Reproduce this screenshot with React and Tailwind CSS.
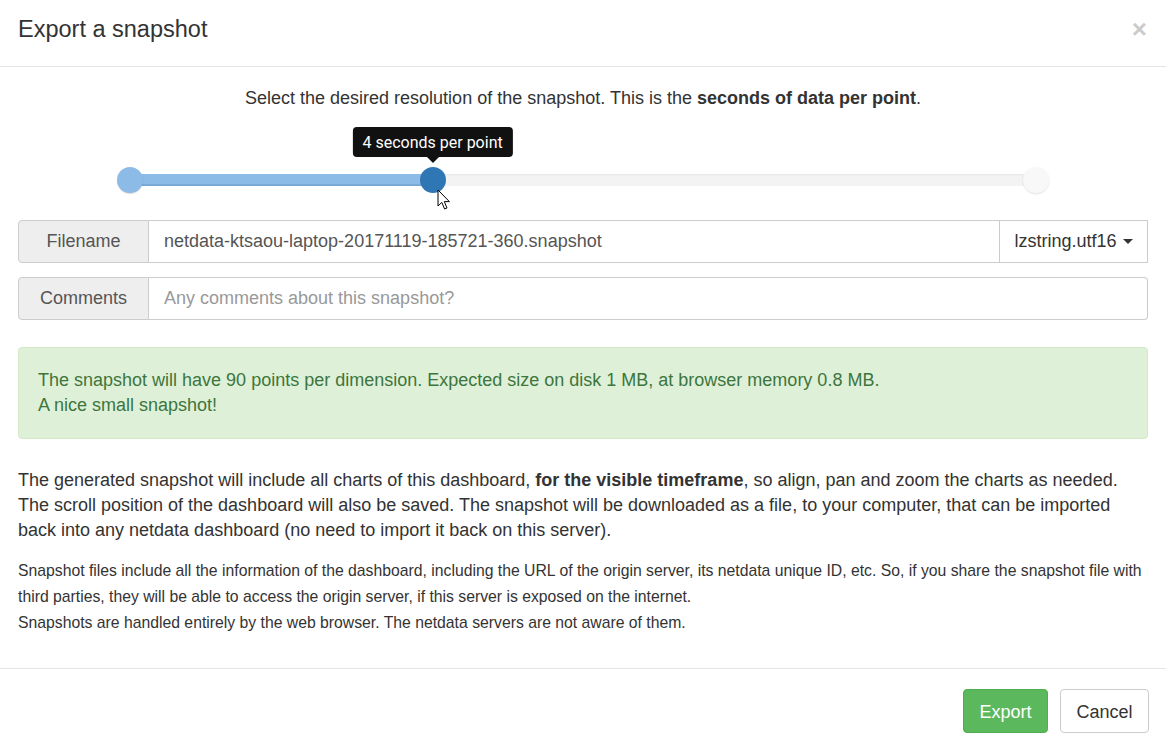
import React, { useState } from "react";

const SnapshotSlider = ({ value }) => {
  // track runs from handle centre 129 to 1036 in the reference
  const pct = value;
  return (
    <div className="px-[99px] mt-[56px]">
      <div className="relative h-[26px]">
        <div className="absolute left-[13px] right-[13px] top-[7px] h-[12px] rounded-full bg-[#f3f3f3] shadow-[inset_0_1px_2px_rgba(0,0,0,0.06)]" />
        <div
          className="absolute left-[13px] top-[7px] h-[12px] bg-[#8cbbe8] border-b-2 border-[#7aa9d6]"
          style={{ width: `calc((100% - 26px) * ${pct})` }}
        />
        <div className="absolute left-0 top-0 w-[26px] h-[26px] rounded-full bg-[#8cbbe8] shadow-[0_1px_1px_rgba(0,0,0,0.15)]" />
        <div className="absolute right-0 top-0 w-[26px] h-[26px] rounded-full bg-[#f8f8f8] shadow-[0_1px_2px_rgba(0,0,0,0.12)]" />
        <div
          className="absolute top-0 w-[26px] h-[26px] rounded-full bg-[#2f76b4]"
          style={{ left: `calc((100% - 26px) * ${pct})` }}
        >
          <div className="absolute bottom-[36px] left-1/2 -translate-x-1/2 whitespace-nowrap rounded-[4px] bg-[#111] px-[10px] h-[30px] flex items-center text-[16px] text-white font-['Roboto',sans-serif]">
            4 seconds per point
          </div>
          <div className="absolute bottom-[30px] left-1/2 -translate-x-1/2 w-0 h-0 border-x-[6px] border-x-transparent border-t-[6px] border-t-[#111]" />
          <svg
            className="absolute left-[17px] top-[22px]"
            width="14"
            height="22"
            viewBox="0 0 14 22"
          >
            <path
              d="M1 1 L1 17 L4.8 13.4 L7.6 20 L10 19 L7.3 12.6 L12.4 12.6 Z"
              fill="#fff"
              stroke="#000"
              strokeWidth="1"
              strokeLinejoin="round"
            />
          </svg>
        </div>
      </div>
    </div>
  );
};

const App = () => {
  const [filename, setFilename] = useState(
    "netdata-ktsaou-laptop-20171119-185721-360.snapshot"
  );
  const [comments, setComments] = useState("");

  return (
    <div className="w-[1166px] h-[747px] bg-white text-[#333] font-['Liberation_Sans',Arial,sans-serif] flex flex-col">
      <div className="h-[67px] border-b border-[#e5e5e5] px-[18px] pt-[15px] flex items-start justify-between">
        <h4 className="text-[23.5px] leading-[28px]">Export a snapshot</h4>
        <button className="text-[26px] font-bold leading-none text-black opacity-20 mr-[1px] mt-[1px]">
          ×
        </button>
      </div>

      <div className="px-[18px] pt-[19px] text-[18px] leading-[25px]">
        <p className="text-center">
          Select the desired resolution of the snapshot. This is the{" "}
          <b>seconds of data per point</b>.
        </p>

        <SnapshotSlider value={0.334} />

        <div className="mt-[27px] flex h-[43px]">
          <span className="w-[131px] shrink-0 flex items-center justify-center bg-[#eee] border border-[#ccc] rounded-l-[4px] text-[#555]">
            Filename
          </span>
          <input
            type="text"
            value={filename}
            onChange={(e) => setFilename(e.target.value)}
            className="flex-1 min-w-0 border-y border-[#ccc] px-[15px] text-[#555] outline-none"
          />
          <button className="w-[149px] shrink-0 border border-[#ccc] bg-white text-[#333] flex items-center justify-center gap-[6px]">
            lzstring.utf16
            <span className="w-0 h-0 border-x-[5px] border-x-transparent border-t-[5px] border-t-[#333]" />
          </button>
        </div>

        <div className="mt-[14px] flex h-[43px]">
          <span className="w-[131px] shrink-0 flex items-center justify-center bg-[#eee] border border-[#ccc] rounded-l-[4px] text-[#555]">
            Comments
          </span>
          <input
            type="text"
            value={comments}
            onChange={(e) => setComments(e.target.value)}
            placeholder="Any comments about this snapshot?"
            className="flex-1 min-w-0 border border-l-0 border-[#ccc] rounded-r-[4px] px-[15px] text-[#555] placeholder:text-[#999] outline-none"
          />
        </div>

        <div className="mt-[27px] h-[92px] bg-[#dff0d8] border border-[#d6e9c6] rounded-[4px] px-[19px] py-[20px] text-[#3c763d]">
          The snapshot will have 90 points per dimension. Expected size on disk 1
          MB, at browser memory 0.8 MB.
          <br />A nice small snapshot!
        </div>

        <p className="mt-[29px]">
          The generated snapshot will include all charts of this dashboard,{" "}
          <b>for the visible timeframe</b>, so align, pan and zoom the charts as
          needed. The scroll position of the dashboard will also be saved. The
          snapshot will be downloaded as a file, to your computer, that can be
          imported back into any netdata dashboard (no need to import it back on
          this server).
        </p>

        <p className="mt-[15px] text-[15.75px] leading-[26px]">
          Snapshot files include all the information of the dashboard, including
          the URL of the origin server, its netdata unique ID, etc. So, if you
          share the snapshot file with third parties, they will be able to access
          the origin server, if this server is exposed on the internet.
          <br />
          Snapshots are handled entirely by the web browser. The netdata servers
          are not aware of them.
        </p>
      </div>

      <div className="mt-auto h-[79px] border-t border-[#e5e5e5] px-[17px] pt-[20px] flex justify-end gap-[12px] text-[18px]">
        <button className="h-[44px] w-[85px] pt-[2px] rounded-[4px] bg-[#5cb85c] border border-[#4cae4c] text-white">
          Export
        </button>
        <button className="h-[44px] w-[89px] pt-[2px] rounded-[4px] bg-white border border-[#ccc] text-[#333]">
          Cancel
        </button>
      </div>
    </div>
  );
};

export default App;
